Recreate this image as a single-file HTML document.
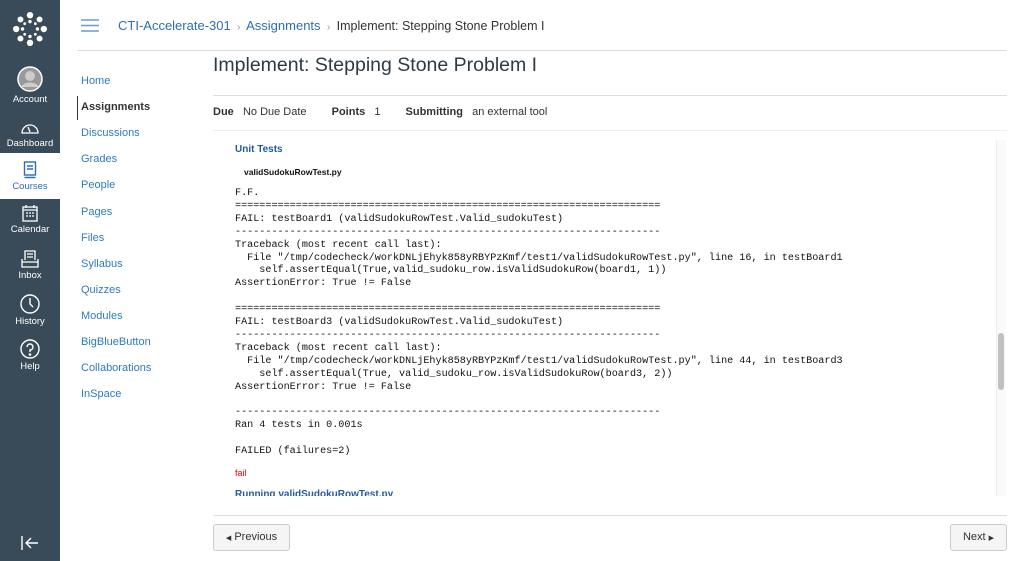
<!DOCTYPE html>
<html><head><meta charset="utf-8"><style>
*{margin:0;padding:0;box-sizing:border-box}
body{width:1024px;height:561px;overflow:hidden;background:#fff;font-family:"Liberation Sans",sans-serif;position:relative}
#gn{position:absolute;left:0;top:0;width:60px;height:561px;background:#394b58}
.gi{position:absolute;left:0;width:60px;text-align:center;color:#fff;font-size:9.5px}
.gi svg{display:block;margin:0 auto 2px}
.abs{position:absolute}
.nav a{position:absolute;left:81px;font-size:11px;color:#2d7bbf;text-decoration:none}
pre{font-family:"Liberation Mono",monospace;font-size:10.15px;line-height:12.9px;color:#111}
</style></head><body>
<div id="gn">
<svg class="abs" style="left:13px;top:12px" width="34" height="34" viewBox="0 0 32 32" fill="#fff">
<circle cx="16" cy="3" r="3"/><circle cx="16" cy="29" r="3"/><circle cx="3" cy="16" r="3"/><circle cx="29" cy="16" r="3"/>
<circle cx="7" cy="7" r="2.8"/><circle cx="25" cy="7" r="2.8"/><circle cx="7" cy="25" r="2.8"/><circle cx="25" cy="25" r="2.8"/>
<circle cx="16" cy="9" r="1.6"/><circle cx="16" cy="23" r="1.6"/><circle cx="9" cy="16" r="1.6"/><circle cx="23" cy="16" r="1.6"/>
<circle cx="11" cy="11" r="1.3"/><circle cx="21" cy="11" r="1.3"/><circle cx="11" cy="21" r="1.3"/><circle cx="21" cy="21" r="1.3"/></svg>
<div class="gi" style="top:66px"><svg width="26" height="26" viewBox="0 0 26 26"><circle cx="13" cy="13" r="12" fill="#999" stroke="#fff" stroke-width="1.5"/><circle cx="13" cy="10" r="5" fill="#ccc"/><path d="M4 21c3-6 15-6 18 0" fill="#ccc"/></svg>Account</div>
<div class="gi" style="top:120px"><svg width="20" height="16" viewBox="0 0 20 16" fill="none" stroke="#fff" stroke-width="1.3"><path d="M2 13a8 8 0 1 1 16 0z"/><path d="M10 12l-2-5"/></svg>Dashboard</div>
<div style="position:absolute;left:0;top:153px;width:60px;height:46px;background:#fff"></div>
<div class="gi" style="top:161px;color:#2d6db5"><svg width="14" height="18" viewBox="0 0 14 18" fill="none" stroke="#2d6db5" stroke-width="1.4"><rect x="1.5" y="1" width="11" height="13"/><path d="M4 5h6M4 8h6M1.5 16.5h11"/></svg>Courses</div>
<div class="gi" style="top:205px"><svg width="16" height="17" viewBox="0 0 16 17" fill="none" stroke="#fff" stroke-width="1.3"><rect x="1" y="2" width="14" height="14"/><path d="M1 5h14M4 0v3M12 0v3M4 8h2M7 8h2M10 8h2M4 11h2M7 11h2M10 11h2"/></svg>Calendar</div>
<div class="gi" style="top:250px"><svg width="18" height="18" viewBox="0 0 18 18" fill="none" stroke="#fff" stroke-width="1.3"><path d="M4 10V1h10v9M1 9v8h16V9M1 12h16M6 4h6M6 7h6"/></svg>Inbox</div>
<div class="gi" style="top:294px"><svg width="20" height="20" viewBox="0 0 20 20" fill="none" stroke="#fff" stroke-width="1.4"><circle cx="10" cy="10" r="9"/><path d="M10 4v6l3 3"/></svg>History</div>
<div class="gi" style="top:339px"><svg width="20" height="20" viewBox="0 0 20 20" fill="none" stroke="#fff" stroke-width="1.4"><circle cx="10" cy="10" r="9"/><path d="M7 8a3 3 0 1 1 3 3v2"/><circle cx="10" cy="15.5" r=".6" fill="#fff"/></svg>Help</div>
<svg class="abs" style="left:21px;top:536px" width="18" height="14" viewBox="0 0 18 14" fill="none" stroke="#fff" stroke-width="1.4"><path d="M1 0v14M17 7H5M10 2L5 7l5 5"/></svg>
</div>
<svg class="abs" style="left:81px;top:19px" width="18" height="13"><path d="M0 1h18M0 6.5h18M0 12h18" stroke="#6c9ccc" stroke-width="1.6"/></svg>
<div class="abs" style="left:118px;top:18px;font-size:13px;color:#2d6db5">CTI-Accelerate-301 <span style="color:#999;font-size:10px">&nbsp;›&nbsp;</span> Assignments <span style="color:#999;font-size:10px">&nbsp;›&nbsp;</span> <span style="color:#333;font-size:12.5px">Implement: Stepping Stone Problem I</span></div>
<div class="abs" style="left:77px;top:50px;width:930px;border-top:1px solid #ddd"></div>
<div class="nav">
<a style="top:75px">Home</a>
<div class="abs" style="left:77px;top:96px;height:24px;border-left:1px solid #333"></div>
<a style="top:101px;color:#333;font-weight:bold">Assignments</a>
<a style="top:127px">Discussions</a><a style="top:153px">Grades</a><a style="top:179px">People</a><a style="top:206px">Pages</a><a style="top:232px">Files</a><a style="top:258px">Syllabus</a><a style="top:284px">Quizzes</a><a style="top:310px">Modules</a><a style="top:336px">BigBlueButton</a><a style="top:362px">Collaborations</a><a style="top:388px">InSpace</a>
</div>
<div class="abs" style="left:213px;top:54px;font-size:19.5px;color:#2d3b45">Implement: Stepping Stone Problem I</div>
<div class="abs" style="left:213px;top:95px;width:794px;border-top:1px solid #ddd"></div>
<div class="abs" style="left:213px;top:106px;font-size:11px;color:#333"><b>Due</b>&nbsp;&nbsp; No Due Date <span style="margin-left:22px"><b>Points</b>&nbsp;&nbsp; 1</span><span style="margin-left:25px"><b>Submitting</b>&nbsp;&nbsp; an external tool</span></div>
<div class="abs" style="left:213px;top:130px;width:794px;border-top:1px solid #eee"></div>
<div class="abs" style="left:225px;top:140px;width:781px;height:356px;overflow:hidden">
<div class="abs" style="left:10px;top:4px;font-size:10px;font-weight:bold;color:#2459a8">Unit Tests</div>
<div class="abs" style="left:19px;top:27px;font-size:8.5px;font-weight:bold;color:#111">validSudokuRowTest.py</div>
<pre class="abs" style="left:10px;top:48px">F.F.
======================================================================
FAIL: testBoard1 (validSudokuRowTest.Valid_sudokuTest)
----------------------------------------------------------------------
Traceback (most recent call last):
  File "/tmp/codecheck/workDNLjEhyk858yRBYPzKmf/test1/validSudokuRowTest.py", line 16, in testBoard1
    self.assertEqual(True,valid_sudoku_row.isValidSudokuRow(board1, 1))
AssertionError: True != False

======================================================================
FAIL: testBoard3 (validSudokuRowTest.Valid_sudokuTest)
----------------------------------------------------------------------
Traceback (most recent call last):
  File "/tmp/codecheck/workDNLjEhyk858yRBYPzKmf/test1/validSudokuRowTest.py", line 44, in testBoard3
    self.assertEqual(True, valid_sudoku_row.isValidSudokuRow(board3, 2))
AssertionError: True != False

----------------------------------------------------------------------
Ran 4 tests in 0.001s

FAILED (failures=2)</pre>
<div class="abs" style="left:10px;top:328px;font-size:9px;color:#e00">fail</div>
<div class="abs" style="left:10px;top:349px;font-size:10px;font-weight:bold;color:#2459a8">Running validSudokuRowTest.py</div>
<div class="abs" style="left:771px;top:0;width:10px;height:356px;border-left:1px solid #eee;background:#fafafa"></div>
<div class="abs" style="left:773px;top:193px;width:6px;height:57px;border-radius:3px;background:#c1c1c1"></div>
</div>
<div class="abs" style="left:213px;top:515px;width:794px;border-top:1px solid #ddd"></div>
<div class="abs" style="left:213px;top:524px;width:77px;height:27px;border:1px solid #c7cdd1;border-radius:3px;background:#f5f5f5;font-size:11px;color:#333;text-align:center;line-height:25px"><span style="font-size:7px">◀</span> Previous</div>
<div class="abs" style="left:950px;top:524px;width:57px;height:27px;border:1px solid #c7cdd1;border-radius:3px;background:#f5f5f5;font-size:11px;color:#333;text-align:center;line-height:25px">Next <span style="font-size:7px">▶</span></div>
</body></html>
